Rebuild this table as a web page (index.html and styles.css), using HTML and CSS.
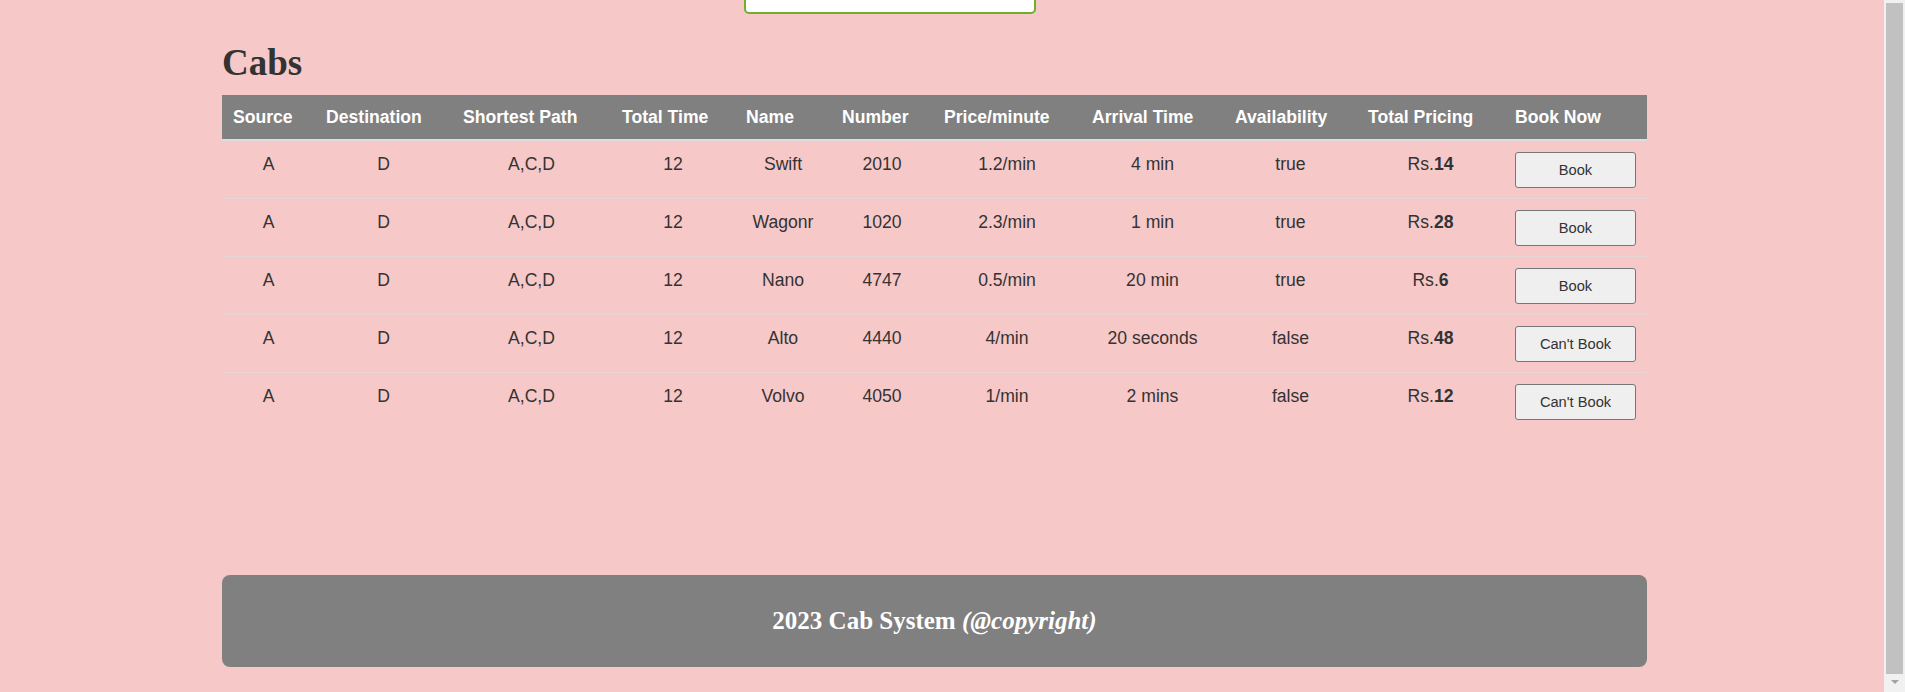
FILE: index.html
```html
<!DOCTYPE html>
<html>
<head>
<meta charset="utf-8">
<title>Cabs</title>
<link rel="stylesheet" href="styles.css">
</head>
<body>
<div class="window">
  <div class="viewport">
    <div class="page">
      <div class="search-box"></div>
      <h1 class="title">Cabs</h1>
      <table class="cabs">
        <colgroup>
          <col class="c1"><col class="c2"><col class="c3"><col class="c4"><col class="c5"><col class="c6"><col class="c7"><col class="c8"><col class="c9"><col class="c10"><col class="c11">
        </colgroup>
        <thead>
          <tr>
            <th>Source</th><th>Destination</th><th>Shortest Path</th><th>Total Time</th><th>Name</th><th>Number</th><th>Price/minute</th><th>Arrival Time</th><th>Availability</th><th>Total Pricing</th><th>Book Now</th>
          </tr>
        </thead>
        <tbody>
          <tr>
            <td>A</td><td>D</td><td>A,C,D</td><td>12</td><td>Swift</td><td>2010</td><td>1.2/min</td><td>4 min</td><td>true</td><td>Rs.<b>14</b></td><td><button class="book-btn">Book</button></td>
          </tr>
          <tr>
            <td>A</td><td>D</td><td>A,C,D</td><td>12</td><td>Wagonr</td><td>1020</td><td>2.3/min</td><td>1 min</td><td>true</td><td>Rs.<b>28</b></td><td><button class="book-btn">Book</button></td>
          </tr>
          <tr>
            <td>A</td><td>D</td><td>A,C,D</td><td>12</td><td>Nano</td><td>4747</td><td>0.5/min</td><td>20 min</td><td>true</td><td>Rs.<b>6</b></td><td><button class="book-btn">Book</button></td>
          </tr>
          <tr>
            <td>A</td><td>D</td><td>A,C,D</td><td>12</td><td>Alto</td><td>4440</td><td>4/min</td><td>20 seconds</td><td>false</td><td>Rs.<b>48</b></td><td><button class="book-btn">Can't Book</button></td>
          </tr>
          <tr>
            <td>A</td><td>D</td><td>A,C,D</td><td>12</td><td>Volvo</td><td>4050</td><td>1/min</td><td>2 mins</td><td>false</td><td>Rs.<b>12</b></td><td><button class="book-btn">Can't Book</button></td>
          </tr>
        </tbody>
      </table>
      <footer class="footer">
        <h3 class="footer-text">2023 Cab System <em>(@copyright)</em></h3>
      </footer>
    </div>
  </div>
  <div class="scrollbar">
    <div class="thumb"></div>
    <div class="arrow"></div>
  </div>
</div>
</body>
</html>
```

FILE: styles.css
```css
html, body {
  margin: 0;
  padding: 0;
}

body {
  background: #f7c8c8;
  color: #333;
  font-family: "Liberation Sans", Arial, sans-serif;
}

.window {
  display: flex;
  height: 692px;
  overflow: hidden;
}

.viewport {
  flex: 1;
  overflow: hidden;
}

.page {
  width: 1425px;
  margin-left: 222px;
}

.search-box {
  width: 288px;
  height: 48px;
  margin-top: -38px;
  margin-left: 522px;
  background: #fff;
  border: 2px solid #72ad2b;
  border-radius: 5px;
}

.title {
  font-family: "Liberation Serif", "Times New Roman", serif;
  font-weight: bold;
  font-size: 37px;
  line-height: 42px;
  color: #333;
  margin: 28px 0 11px;
}

.cabs {
  width: 1425px;
  border-collapse: collapse;
  table-layout: fixed;
  font-size: 17.6px;
}

.c1 { width: 93px; }
.c2 { width: 137px; }
.c3 { width: 159px; }
.c4 { width: 124px; }
.c5 { width: 96px; }
.c6 { width: 102px; }
.c7 { width: 148px; }
.c8 { width: 143px; }
.c9 { width: 133px; }
.c10 { width: 147px; }
.c11 { width: 143px; }

.cabs th {
  background: #808080;
  color: #fff;
  font-weight: bold;
  text-align: left;
  padding: 12px 11px;
  line-height: 20px;
  border-bottom: 2px solid #dddddd;
  white-space: nowrap;
}

.cabs td {
  text-align: center;
  vertical-align: top;
  padding: 11px 11px 10px;
  line-height: 24px;
  color: #333;
  white-space: nowrap;
}

.cabs tbody tr + tr td {
  border-top: 1px solid #e6d6d6;
}

.book-btn {
  display: block;
  width: 121px;
  height: 36px;
  margin: 0 auto;
  padding: 0;
  background: #efefef;
  border: 1px solid #767676;
  border-radius: 3px;
  color: #333;
  font-family: "Liberation Sans", Arial, sans-serif;
  font-size: 14.67px;
}

.footer {
  margin-top: 145px;
  height: 92px;
  background: #808080;
  border-radius: 8px;
  display: flex;
  align-items: center;
  justify-content: center;
}

.footer-text {
  margin: 0;
  color: #fff;
  font-family: "Liberation Serif", "Times New Roman", serif;
  font-weight: bold;
  font-size: 25px;
}

.scrollbar {
  width: 21px;
  height: 692px;
  background: #f1f1f1;
  display: flex;
  flex-direction: column;
  align-items: center;
  padding-top: 3px;
  box-sizing: border-box;
}

.thumb {
  width: 17px;
  height: 671px;
  background: #c1c1c1;
}

.arrow {
  margin-top: 6px;
  width: 0;
  height: 0;
  border-left: 4px solid transparent;
  border-right: 4px solid transparent;
  border-top: 4px solid #a3a3a3;
}
```
